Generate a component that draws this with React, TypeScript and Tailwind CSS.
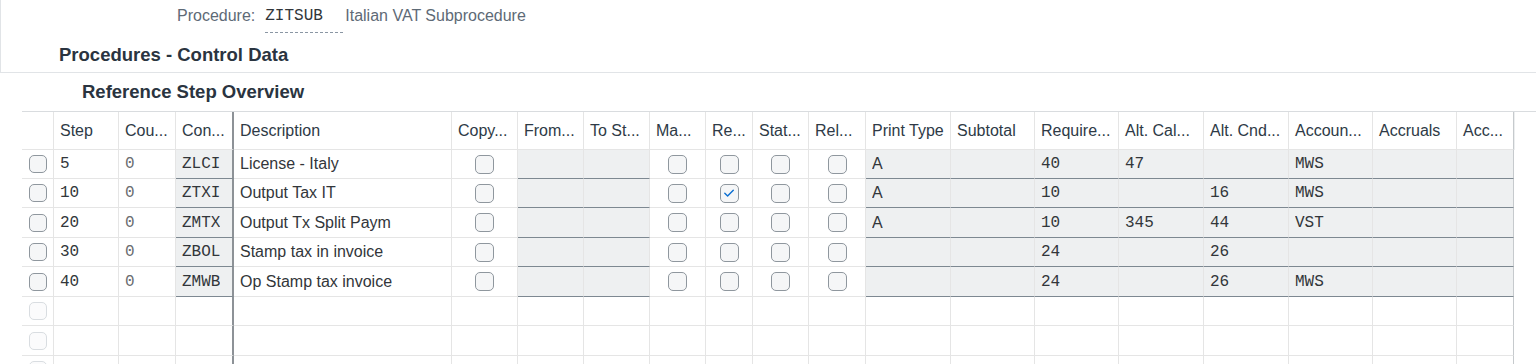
type Kind = "sel" | "mono" | "muted" | "con" | "text" | "check" | "field" | "fieldMono";

interface Col {
  key: string;
  label: string;
  width: string;
  kind: Kind;
}

interface Step {
  step: string;
  cou: string;
  con: string;
  desc: string;
  re?: boolean;
  print?: string;
  req?: string;
  altcal?: string;
  altcnd?: string;
  acc?: string;
}

const COLS: Col[] = [
  { key: "sel", label: "", width: "w-[32px]", kind: "sel" },
  { key: "step", label: "Step", width: "w-[65px]", kind: "mono" },
  { key: "cou", label: "Cou...", width: "w-[57px]", kind: "muted" },
  { key: "con", label: "Con...", width: "w-[58px]", kind: "con" },
  { key: "desc", label: "Description", width: "w-[218px]", kind: "text" },
  { key: "copy", label: "Copy...", width: "w-[66px]", kind: "check" },
  { key: "from", label: "From...", width: "w-[66px]", kind: "field" },
  { key: "to", label: "To St...", width: "w-[66px]", kind: "field" },
  { key: "ma", label: "Ma...", width: "w-[56px]", kind: "check" },
  { key: "re", label: "Re...", width: "w-[47px]", kind: "check" },
  { key: "stat", label: "Stat...", width: "w-[56px]", kind: "check" },
  { key: "rel", label: "Rel...", width: "w-[57px]", kind: "check" },
  { key: "print", label: "Print Type", width: "w-[85px]", kind: "field" },
  { key: "sub", label: "Subtotal", width: "w-[84px]", kind: "field" },
  { key: "req", label: "Require...", width: "w-[84px]", kind: "fieldMono" },
  { key: "altcal", label: "Alt. Cal...", width: "w-[85px]", kind: "fieldMono" },
  { key: "altcnd", label: "Alt. Cnd...", width: "w-[85px]", kind: "fieldMono" },
  { key: "acc", label: "Accoun...", width: "w-[84px]", kind: "fieldMono" },
  { key: "accr", label: "Accruals", width: "w-[84px]", kind: "field" },
  { key: "acc2", label: "Acc...", width: "w-[57px]", kind: "field" },
];

const STEPS: Step[] = [
  { step: "5", cou: "0", con: "ZLCI", desc: "License - Italy", print: "A", req: "40", altcal: "47", acc: "MWS" },
  { step: "10", cou: "0", con: "ZTXI", desc: "Output Tax IT", re: true, print: "A", req: "10", altcnd: "16", acc: "MWS" },
  { step: "20", cou: "0", con: "ZMTX", desc: "Output Tx Split Paym", print: "A", req: "10", altcal: "345", altcnd: "44", acc: "VST" },
  { step: "30", cou: "0", con: "ZBOL", desc: "Stamp tax in invoice", req: "24", altcnd: "26" },
  { step: "40", cou: "0", con: "ZMWB", desc: "Op Stamp tax invoice", req: "24", altcnd: "26", acc: "MWS" },
];

const ROW_HEIGHTS = ["h-[29px]", "h-[29px]", "h-[30px]", "h-[29px]", "h-[30px]", "h-[29px]", "h-[30px]", "h-[29px]"];

const MONO = "font-['Liberation_Mono',monospace]";

function CheckBox({ checked, faint, small }: { checked?: boolean; faint?: boolean; small?: boolean }) {
  return (
    <span
      className={`flex items-center justify-center rounded-[5px] border ${small ? "h-[18px] w-[18px]" : "h-[19px] w-[19px]"} ${
        faint ? "border-[#d9dde1] bg-[#fbfbfc]" : "border-[#8f979e] bg-[#f5f6f7]"
      }`}
    >
      {checked && (
        <svg viewBox="0 0 16 16" className="h-[14px] w-[14px]">
          <path d="M3.2 8.3l3.2 3.1 6.5-6.6" fill="none" stroke="#0a6ed1" strokeWidth="1.6" strokeLinecap="round" strokeLinejoin="round" />
        </svg>
      )}
    </span>
  );
}

function cellValue(row: Step, key: string): string {
  const v = (row as unknown as Record<string, string | boolean | undefined>)[key];
  return typeof v === "string" ? v : "";
}

function DataCell({ col, row, last }: { col: Col; row?: Step; last: boolean }) {
  const edge = last ? "border-r border-r-[#c6cacd]" : col.kind === "con" ? "border-r-2 border-r-[#8d9297]" : "border-r border-r-[#e5e5e5]";
  const isField = row && (col.kind === "con" || col.kind === "field" || col.kind === "fieldMono");
  const bottom = isField ? "border-b border-b-[#7d8891] bg-[#eef0f1]" : "border-b border-b-[#e5e5e5]";
  const base = `flex h-full shrink-0 items-center ${col.width} ${edge} ${bottom}`;

  if (col.kind === "sel") {
    return (
      <div className={`${base} justify-center pl-[1px]`}>
        <CheckBox small faint={!row} />
      </div>
    );
  }
  if (!row) return <div className={base} />;

  if (col.kind === "check") {
    return (
      <div className={`${base} justify-center`}>
        <CheckBox checked={col.key === "re" && row.re} />
      </div>
    );
  }

  const text = cellValue(row, col.key);
  const font =
    col.kind === "mono" || col.kind === "con" || col.kind === "fieldMono"
      ? `${MONO} text-[#32363a]`
      : col.kind === "muted"
        ? `${MONO} text-[#6a6d70]`
        : "text-[#32363a]";

  return (
    <div className={`${base} pl-[6px] ${font}`}>
      <span className="truncate">{text}</span>
    </div>
  );
}

export default function App() {
  return (
    <div className="h-[364px] w-[1536px] overflow-hidden bg-white font-['Liberation_Sans',Arial,sans-serif] text-[16px] text-[#32363a]">
      <div className="h-[73px] border-b border-l border-[#e1e4e7]">
        <div className="flex h-[38px] items-start pl-[176px] pt-[6px] leading-[20px]">
          <span className="text-[#5e6a76]">Procedure:</span>
          <span className={`ml-[10px] w-[78px] border-b border-dashed border-[#8a96a3] pb-[6px] ${MONO} text-[#32363a]`}>ZITSUB</span>
          <span className="ml-[2px] text-[#5e6a76]">Italian VAT Subprocedure</span>
        </div>
        <h1 className="mt-[6px] pl-[58px] text-[18.5px] font-bold leading-[22px] text-[#2a3440]">Procedures - Control Data</h1>
      </div>

      <h2 className="mt-[8px] pl-[82px] text-[18.5px] font-bold leading-[22px] text-[#2a3440]">Reference Step Overview</h2>

      <div className="ml-[22px] mt-[8px]">
        <div className="flex h-[39px] border-t border-[#d9dcdf]">
          {COLS.map((col, i) => (
            <div
              key={col.key}
              className={`flex shrink-0 items-center border-b border-b-[#e5e5e5] pl-[6px] ${col.width} ${
                i === COLS.length - 1
                  ? "border-r border-r-[#c6cacd]"
                  : col.kind === "con"
                    ? "border-r-2 border-r-[#8d9297]"
                    : "border-r border-r-[#e5e5e5]"
              }`}
            >
              <span className="whitespace-nowrap text-[#2e3a46]">{col.label}</span>
            </div>
          ))}
          <div className="flex-1 border-l border-[#eceeef]" />
        </div>

        {ROW_HEIGHTS.map((h, r) => {
          const row = STEPS[r];
          return (
            <div key={r} className={`flex ${h}`}>
              {COLS.map((col, i) => (
                <DataCell key={col.key} col={col} row={row} last={i === COLS.length - 1} />
              ))}
            </div>
          );
        })}
      </div>
    </div>
  );
}
